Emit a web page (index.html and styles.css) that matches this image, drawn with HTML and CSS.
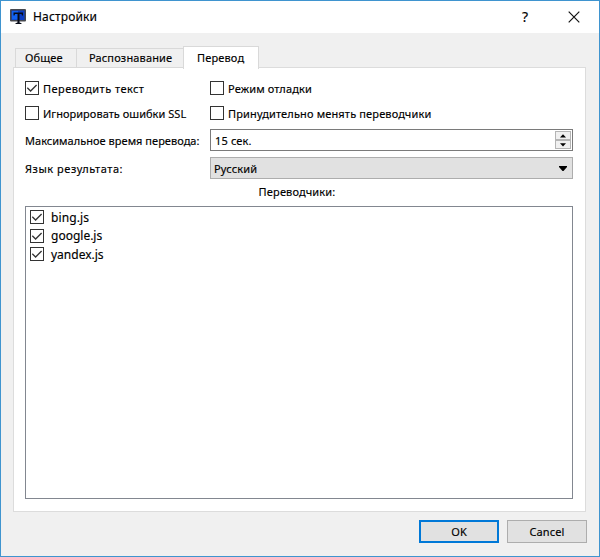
FILE: index.html
```html
<!DOCTYPE html>
<html lang="ru">
<head>
<meta charset="utf-8">
<title>Настройки</title>
<link rel="stylesheet" href="styles.css">
</head>
<body>
<div class="window">
  <header class="titlebar">
    <svg class="app-icon" width="16" height="16" viewBox="0 0 16 16">
      <rect x="0" y="0" width="16" height="12.5" rx="1" fill="#46494f"/>
      <rect x="1.5" y="1.5" width="13" height="9.5" fill="#0b3dc4"/>
      <rect x="2" y="2" width="6" height="8.5" fill="#1262f2"/>
      <path d="M3.5 3.5H13V6.5H12L11.5 5H9.5V13.5L11.5 14.3V15H5.5V14.3L7.5 13.5V5H5L4.5 6.5H3.5Z" fill="#070b18"/>
    </svg>
    <h1 class="title">Настройки</h1>
    <span class="help">?</span>
    <svg class="close" width="12" height="12" viewBox="0 0 12 12"><path d="M.7.7 11.3 11.3M11.3.7.7 11.3" stroke="#111" stroke-width="1.2"/></svg>
  </header>
  <nav class="tabs">
    <div class="tab tab-general">Общее</div>
    <div class="tab tab-recognition">Распознавание</div>
    <div class="tab tab-translation active">Перевод</div>
  </nav>
  <main class="panel">
    <div class="form">
      <label class="check wide"><svg class="box" viewBox="0 0 14 14"><rect x=".5" y=".5" width="13" height="13"/><path d="M2.3 6.8 5.6 10 11.6 4"/></svg><span>Переводить текст</span></label>
      <label class="check"><svg class="box" viewBox="0 0 14 14"><rect x=".5" y=".5" width="13" height="13"/></svg><span>Режим отладки</span></label>
      <label class="check plain"><svg class="box" viewBox="0 0 14 14"><rect x=".5" y=".5" width="13" height="13"/></svg><span>Игнорировать ошибки SSL</span></label>
      <label class="check"><svg class="box" viewBox="0 0 14 14"><rect x=".5" y=".5" width="13" height="13"/></svg><span>Принудительно менять переводчики</span></label>
      <div class="label plain">Максимальное время перевода:</div>
      <div class="spin"><span>15 сек.</span>
        <div class="steppers">
          <div class="step"><svg width="6" height="4" viewBox="0 0 6 4"><path d="M0 3.5 3 .3 6 3.5Z"/></svg></div>
          <div class="step"><svg width="6" height="4" viewBox="0 0 6 4"><path d="M0 .3H6L3 3.5Z"/></svg></div>
        </div>
      </div>
      <div class="label language">Язык результата:</div>
      <div class="combo"><span>Русский</span><svg width="8" height="5" viewBox="0 0 8 5"><path d="M0 0H8V1L4.5 5H3.5L0 1Z"/></svg></div>
    </div>
    <div class="caption">Переводчики:</div>
    <div class="list">
      <label class="item bing"><svg class="box" viewBox="0 0 14 14"><rect x=".5" y=".5" width="13" height="13"/><path d="M2.3 6.8 5.6 10 11.6 4"/></svg>bing.js</label>
      <label class="item"><svg class="box" viewBox="0 0 14 14"><rect x=".5" y=".5" width="13" height="13"/><path d="M2.3 6.8 5.6 10 11.6 4"/></svg>google.js</label>
      <label class="item"><svg class="box" viewBox="0 0 14 14"><rect x=".5" y=".5" width="13" height="13"/><path d="M2.3 6.8 5.6 10 11.6 4"/></svg>yandex.js</label>
    </div>
  </main>
  <footer class="actions">
    <div class="button primary">OK</div>
    <div class="button">Cancel</div>
  </footer>
</div>
</body>
</html>
```
FILE: styles.css
```css
* { box-sizing: border-box; }
body { margin: 0; font: 11px/15px "Noto Sans", sans-serif; color: #000; letter-spacing: .15px; -webkit-text-stroke: .15px #000; }
svg { display: block; flex: none; }
.window { width: 600px; height: 557px; border: 1px solid #3f94cf; background: #f0f0f0; display: flex; flex-direction: column; }
.titlebar { height: 32px; flex: none; background: #fff; display: flex; align-items: center; padding: 0 19px 0 9px; }
.app-icon { margin-top: -1px; }
.title { flex: 1; margin: 0 0 0 7px; font-size: 12px; font-weight: 400; line-height: 18px; }
.help { width: 8px; margin-right: 38px; font-size: 14px; line-height: 16px; }
.tabs { height: 35px; flex: none; padding-left: 14px; display: flex; align-items: flex-end; position: relative; z-index: 1; }
.tab { height: 20px; border: 1px solid #d9d9d9; border-right: 0; line-height: 18px; padding-left: 9px; }
.tab-general { width: 61px; }
.tab-recognition { width: 107px; padding-left: 12px; }
.tab-translation { width: 76px; padding-left: 13px; }
.tab.active { height: 23px; margin-bottom: -1px; border-right: 1px solid #d9d9d9; border-bottom: 0; background: #fff; line-height: 21px; }
.panel { width: 573px; height: 445px; flex: none; margin: -1px 0 0 12px; padding: 13px 12px 12px 11px; background: #fff; border: 1px solid #dcdcdc; display: flex; flex-direction: column; }
.form { display: grid; grid-template-columns: 185px 363px; grid-template-rows: 25px 23px 28px 22px; height: 98px; }
.check { height: 14px; display: flex; align-items: center; gap: 4px; }
.box { width: 14px; height: 14px; fill: #fff; stroke: #333; stroke-width: 1; }
.box path { fill: none; stroke-width: 1.3; }
.wide { letter-spacing: .45px; }
.plain { letter-spacing: .03px; }
.label { height: 22px; line-height: 23px; }
.language { letter-spacing: .53px; }
.spin, .combo { height: 22px; display: flex; align-items: center; justify-content: space-between; }
.spin { border: 1px solid #7a7a7a; padding: 0 1px 0 4px; }
.combo { border: 1px solid #adadad; background: #e1e1e1; padding: 0 5px 0 3px; }
.steppers { width: 16px; height: 18px; display: grid; grid-template-rows: 9px 9px; }
.step { border: 1px solid #b4b4b4; background: #f0f0f0; display: flex; align-items: center; justify-content: center; }
.caption { height: 27px; line-height: 26px; text-align: center; letter-spacing: .18px; padding-right: 4px; }
.list { height: 293px; border: 1px solid #828790; padding: 1px 4px; font-size: 12px; letter-spacing: 0; }
.item { height: 18.5px; display: flex; align-items: center; gap: 7px; }
.bing { letter-spacing: .1px; }
.actions { display: flex; justify-content: flex-end; gap: 8px; padding: 8px 12px 0 0; }
.button { width: 80px; height: 23px; border: 1px solid #adadad; background: #e1e1e1; text-align: center; line-height: 22px; }
.primary { border: 2px solid #0078d7; line-height: 20px; }
```
